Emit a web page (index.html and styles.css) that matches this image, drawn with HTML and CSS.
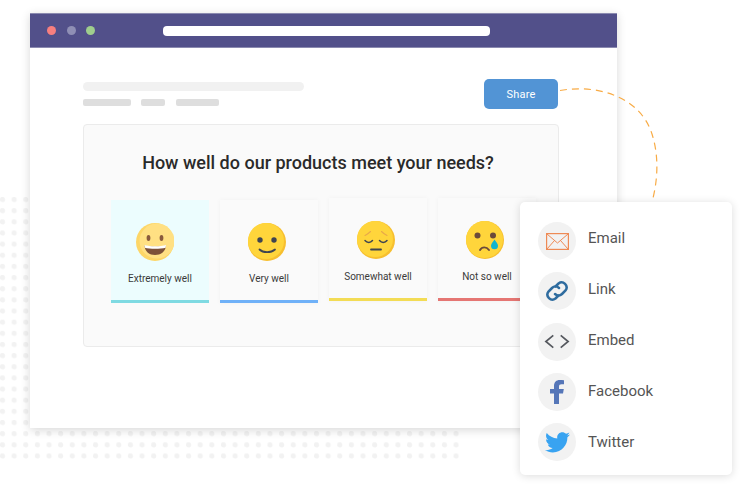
FILE: index.html
```html
<!DOCTYPE html>
<html lang="en">
<head>
<meta charset="utf-8">
<title>Share survey</title>
<link rel="stylesheet" href="styles.css">
</head>
<body>
<div class="stage">
  <svg class="dots" width="470" height="270">
    <defs>
      <pattern id="dot" width="11.63" height="11.15" patternUnits="userSpaceOnUse">
        <circle cx="2.500" cy="2.500" r="2.600" fill="#f2f2f2"/>
      </pattern>
    </defs>
    <rect width="459" height="264" fill="url(#dot)"/>
  </svg>
  <main class="window">
    <header class="titlebar">
      <div class="lights">
        <span class="light light-red"></span>
        <span class="light light-grey"></span>
        <span class="light light-green"></span>
      </div>
      <div class="address"></div>
    </header>
    <div class="content">
      <div class="toprow">
        <div class="skeleton">
          <div class="skel-line"></div>
          <div class="skel-bits">
            <span class="bit bit-a"></span>
            <span class="bit bit-b"></span>
            <span class="bit bit-c"></span>
          </div>
        </div>
        <button class="share">Share</button>
      </div>
      <section class="card">
        <h1 class="question">How well do our products meet your needs?</h1>
        <div class="options">
          <div class="option option-active shift bar-cyan">
            <svg class="emoji emoji-wide" viewBox="0 0 38 38">
              <circle cx="19" cy="19" r="19" fill="#fdd667"/>
              <circle cx="21" cy="18" r="17.500" fill="#ffe083"/>
              <ellipse cx="12.500" cy="15" rx="1.900" ry="3" fill="#8a5a3c"/>
              <ellipse cx="25.500" cy="15" rx="1.900" ry="3" fill="#8a5a3c"/>
              <path d="M8.500 22.500C14 24 24 24 30 22.500C29.500 29 24.500 32 19 32C13.500 32 9 29 8.500 22.500Z" fill="#7d5138"/>
              <path d="M8.500 22C14 23.800 24 23.800 30 22L29.700 24.800C24 26.200 14 26.200 8.800 24.800Z" fill="#fff"/>
            </svg>
            <span class="label">Extremely well</span>
          </div>
          <div class="option shift bar-blue">
            <svg class="emoji" viewBox="0 0 38 38">
              <circle cx="19" cy="19" r="19" fill="#f7bf2f"/>
              <circle cx="18" cy="18" r="18" fill="#ffd53b"/>
              <circle cx="12" cy="17" r="2.700" fill="#3f4450"/>
              <circle cx="26" cy="17" r="2.700" fill="#3f4450"/>
              <path d="M11.500 26.500C15 30 23 30 27 26.500" fill="none" stroke="#3f4450" stroke-width="1.800" stroke-linecap="round"/>
            </svg>
            <span class="label">Very well</span>
          </div>
          <div class="option bar-yellow">
            <svg class="emoji" viewBox="0 0 38 38">
              <circle cx="19" cy="19" r="19" fill="#f7bf2f"/>
              <circle cx="18" cy="18" r="18" fill="#ffd53b"/>
              <path d="M8 14.500C10 13.500 12 12 13.500 10.500M30 14.500C28 13.500 26 12 24.500 10.500" fill="none" stroke="#e9a94a" stroke-width="1.100" stroke-linecap="round"/>
              <path d="M8 19.500C10 22 13.500 22 15.500 19.500M22.500 19.500C24.500 22 28 22 30 19.500" fill="none" stroke="#3f4450" stroke-width="1.500" stroke-linecap="round"/>
              <path d="M14 28.500H24" stroke="#3f4450" stroke-width="1.800" stroke-linecap="round"/>
            </svg>
            <span class="label">Somewhat well</span>
          </div>
          <div class="option bar-red">
            <svg class="emoji" viewBox="0 0 38 38">
              <circle cx="19" cy="19" r="19" fill="#f7bf2f"/>
              <circle cx="18.500" cy="18.500" r="18.500" fill="#ffd53b"/>
              <circle cx="11.500" cy="14.500" r="3" fill="#6b4a3a"/>
              <circle cx="27" cy="14.500" r="3" fill="#6b4a3a"/>
              <path d="M14 29C16 25.500 20.500 25.500 23 29" fill="none" stroke="#6b4a3a" stroke-width="1.900" stroke-linecap="round"/>
              <path d="M28.500 18.500C30.500 21.500 32 23 32 24.800A3.500 3.500 0 0 1 25 24.800C25 23 26.500 21.500 28.500 18.500Z" fill="#10b4cf"/>
            </svg>
            <span class="label">Not so well</span>
          </div>
        </div>
      </section>
    </div>
  </main>

  <svg class="connector" viewBox="0 0 747 490">
    <path d="M560 90.500C596 84 640 96 652 134C659 156 658 180 652 202" fill="none" stroke="#f8ab45" stroke-width="1.200" stroke-dasharray="7 5"/>
  </svg>

  <aside class="popup">
    <div class="discs">
      <span class="disc">
        <svg class="icon" viewBox="0 0 23 17" width="23" height="17">
          <rect x="0.600" y="0.600" width="21.800" height="15.800" fill="none" stroke="#ee8a55" stroke-width="1.200"/>
          <path d="M1 1L11.500 10L22 1M1 16L8.500 7.500M22 16L14.500 7.500" fill="none" stroke="#ee8a55" stroke-width="1"/>
        </svg>
      </span>
      <span class="disc">
        <svg class="icon" viewBox="0 0 24 24" width="24" height="24">
          <path d="M10.500 7.500L13.500 4.500A5 5 0 0 1 20.500 11.500L17 15A5 5 0 0 1 10 15" fill="none" stroke="#2f6c9f" stroke-width="2.500" stroke-linecap="round"/>
          <path d="M13.500 16.500L10.500 19.500A5 5 0 0 1 3.500 12.500L7 9A5 5 0 0 1 14 9" fill="none" stroke="#2f6c9f" stroke-width="2.500" stroke-linecap="round"/>
        </svg>
      </span>
      <span class="disc">
        <svg class="icon" viewBox="0 0 28 16" width="26" height="15">
          <path d="M10 1.500L2 8L10 14.500M18 1.500L26 8L18 14.500" fill="none" stroke="#55585e" stroke-width="1.800"/>
        </svg>
      </span>
      <span class="disc">
        <svg class="icon" viewBox="0 0 14 24" width="14" height="24">
          <path d="M4 24V13.500H0V9H4V6C4 2 6.500 0 9.500 0C11 0 12.500 0.100 14 0.300V4.300H11.500C9.800 4.300 9 5 9 6.500V9H13.800L13 13.500H9V24Z" fill="#5576b8"/>
        </svg>
      </span>
      <span class="disc">
        <svg class="icon" viewBox="0 0 24 20" width="25" height="21">
          <path d="M24 2.400C23.100 2.800 22.200 3 21.200 3.200C22.200 2.600 23 1.600 23.400 0.500C22.400 1.100 21.400 1.500 20.200 1.700C19.300 0.700 18 0.100 16.600 0.100C13.900 0.100 11.700 2.300 11.700 5C11.700 5.400 11.700 5.800 11.800 6.100C7.700 5.900 4.100 4 1.700 0.900C1.300 1.700 1 2.500 1 3.400C1 5.100 1.900 6.600 3.200 7.500C2.400 7.500 1.600 7.300 1 6.900V7C1 9.400 2.700 11.400 4.900 11.800C4.500 11.900 4.100 12 3.600 12C3.300 12 3 12 2.700 11.900C3.300 13.900 5.200 15.300 7.300 15.300C5.600 16.600 3.500 17.400 1.200 17.400C0.800 17.400 0.400 17.400 0 17.300C2.200 18.700 4.800 19.500 7.500 19.500C16.600 19.500 21.500 12 21.500 5.500V4.900C22.500 4.200 23.300 3.400 24 2.400Z" fill="#38a3f1"/>
        </svg>
      </span>
    </div>
    <div class="names">
      <span class="name">Email</span>
      <span class="name">Link</span>
      <span class="name">Embed</span>
      <span class="name">Facebook</span>
      <span class="name">Twitter</span>
    </div>
  </aside>
</div>
</body>
</html>
```

FILE: styles.css
```css
* {
  box-sizing: border-box;
}

html,
body {
  margin: 0;
  height: 100%;
  background: #fff;
  overflow: hidden;
}

body {
  font-family: Roboto, "Liberation Sans", sans-serif;
}

.stage {
  position: relative;
  width: 747px;
  height: 490px;
  padding: 13px 0 0 30px;
}

.dots {
  position: absolute;
  left: 0;
  top: 196.500px;
}

.window {
  position: relative;
  width: 587px;
  height: 415px;
  background: #fff;
  box-shadow: 0 2px 9px rgba(0, 0, 0, 0.16);
}

.titlebar {
  display: flex;
  align-items: center;
  height: 35px;
  padding-left: 17px;
  background: #52508a;
  border-top: 1px solid #8b8ab0;
  border-bottom: 1px solid #8b8ab0;
}

.lights {
  display: flex;
  gap: 10.700px;
}

.light {
  width: 9px;
  height: 9px;
  border-radius: 50%;
}

.light-red {
  background: #f77f7f;
}

.light-grey {
  background: #8f8fb5;
}

.light-green {
  background: #9fce8d;
}

.address {
  width: 327px;
  height: 10px;
  margin-left: 67.600px;
  border-radius: 4px;
  background: #fff;
}

.content {
  padding: 31px 58px 0 53px;
}

.toprow {
  display: flex;
  justify-content: space-between;
  align-items: flex-start;
}

.skeleton {
  padding-top: 3px;
}

.skel-line {
  width: 221px;
  height: 9px;
  border-radius: 5px;
  background: #f1f1f1;
}

.skel-bits {
  display: flex;
  margin-top: 8px;
}

.bit {
  height: 7px;
  border-radius: 2px;
  background: #dedede;
}

.bit-a {
  width: 48px;
}

.bit-b {
  width: 24px;
  margin-left: 10px;
}

.bit-c {
  width: 43px;
  margin-left: 11px;
}

.share {
  width: 74px;
  height: 30px;
  margin-right: 1px;
  padding: 0;
  border: 0;
  border-radius: 5px;
  background: #5294d5;
  color: #fff;
  font: 400 11px Roboto, sans-serif;
  letter-spacing: 0.200px;
}

.card {
  width: 476px;
  height: 223px;
  margin-top: 15px;
  padding: 27px 0 0 27px;
  border: 1px solid #ebebeb;
  border-radius: 4px;
  background: #fafafa;
}

.question {
  width: 420px;
  margin: 0 0 0 -3px;
  color: #2a2a2a;
  font-size: 18px;
  font-weight: 500;
  line-height: 22px;
  text-align: center;
  white-space: nowrap;
}

.options {
  display: flex;
  align-items: flex-start;
  gap: 11px;
  margin-top: 24px;
}

.option {
  display: flex;
  flex-direction: column;
  align-items: center;
  width: 98px;
  height: 103px;
  padding-top: 23px;
  background: #fafafa;
  box-shadow: 0 0 5px rgba(0, 0, 0, 0.04);
  border-bottom: 3px solid transparent;
}

.option-active {
  background: #ecfdfe;
  box-shadow: none;
}

.shift {
  margin-top: 2px;
}

.bar-cyan {
  border-bottom-color: #7fdae2;
}

.bar-blue {
  border-bottom-color: #6fb1f8;
}

.bar-yellow {
  border-bottom-color: #f3dc55;
}

.bar-red {
  border-bottom-color: #e57673;
}

.emoji {
  display: block;
  width: 38px;
  height: 38px;
  flex: none;
  margin-right: 4px;
}

.emoji-wide {
  margin-right: 10px;
}

.label {
  margin-top: 12px;
  color: #3a3a3a;
  font-size: 10px;
  line-height: 12px;
  white-space: nowrap;
}

.connector {
  position: absolute;
  left: 0;
  top: 0;
  width: 747px;
  height: 490px;
  pointer-events: none;
}

.popup {
  position: absolute;
  left: 520px;
  top: 202px;
  display: flex;
  gap: 12px;
  width: 212px;
  height: 273px;
  padding: 20px 18px;
  border-radius: 5px;
  background: #fff;
  box-shadow: 0 1px 9px rgba(0, 0, 0, 0.14);
}

.discs {
  display: flex;
  flex-direction: column;
  gap: 12.250px;
}

.disc {
  display: flex;
  align-items: center;
  justify-content: center;
  width: 38px;
  height: 38px;
  flex: none;
  border-radius: 50%;
  background: #f2f2f2;
}

.icon {
  display: block;
}

.names {
  display: flex;
  flex-direction: column;
  gap: 31px;
  padding-top: 6px;
}

.name {
  color: #555;
  font-size: 15px;
  line-height: 20px;
}
```
